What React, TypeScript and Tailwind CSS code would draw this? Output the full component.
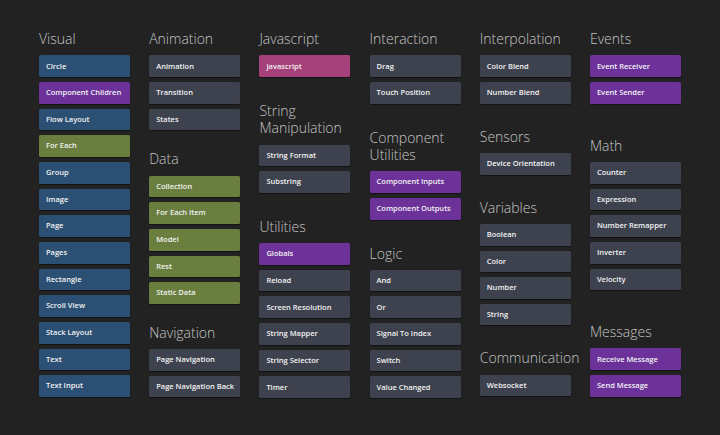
import React from "react";

type Tone = "blue" | "purple" | "green" | "gray" | "pink";

type Section = { title: string[]; tone: Tone; items: { label: string; tone?: Tone }[] };

type Column = { spacing: string; sections: Section[] };

const toneClass: Record<Tone, string> = {
  blue: "bg-[#2b5073]",
  purple: "bg-[#6c329a]",
  green: "bg-[#6a7f3f]",
  gray: "bg-[#3e424f]",
  pink: "bg-[#a6407a]",
};

const s = (title: string, tone: Tone, labels: string[]): Section => ({
  title: title.split("|"),
  tone,
  items: labels.map((label) => ({ label })),
});

const columns: Column[] = [
  {
    spacing: "mt-[25px]",
    sections: [
      {
        title: ["Visual"],
        tone: "blue",
        items: [
          { label: "Circle" },
          { label: "Component Children", tone: "purple" },
          { label: "Flow Layout" },
          { label: "For Each", tone: "green" },
          { label: "Group" },
          { label: "Image" },
          { label: "Page" },
          { label: "Pages" },
          { label: "Rectangle" },
          { label: "Scroll View" },
          { label: "Stack Layout" },
          { label: "Text" },
          { label: "Text Input" },
        ],
      },
    ],
  },
  {
    spacing: "mt-[20px]",
    sections: [
      s("Animation", "gray", ["Animation", "Transition", "States"]),
      s("Data", "green", ["Collection", "For Each Item", "Model", "Rest", "Static Data"]),
      s("Navigation", "gray", ["Page Navigation", "Page Navigation Back"]),
    ],
  },
  {
    spacing: "mt-[25px]",
    sections: [
      s("Javascript", "pink", ["Javascript"]),
      s("String|Manipulation", "gray", ["String Format", "Substring"]),
      {
        title: ["Utilities"],
        tone: "gray",
        items: [
          { label: "Globals", tone: "purple" },
          { label: "Reload" },
          { label: "Screen Resolution" },
          { label: "String Mapper" },
          { label: "String Selector" },
          { label: "Timer" },
        ],
      },
    ],
  },
  {
    spacing: "mt-[25px]",
    sections: [
      s("Interaction", "gray", ["Drag", "Touch Position"]),
      s("Component|Utilities", "purple", ["Component Inputs", "Component Outputs"]),
      s("Logic", "gray", ["And", "Or", "Signal To Index", "Switch", "Value Changed"]),
    ],
  },
  {
    spacing: "mt-[24px]",
    sections: [
      s("Interpolation", "gray", ["Color Blend", "Number Blend"]),
      s("Sensors", "gray", ["Device Orientation"]),
      s("Variables", "gray", ["Boolean", "Color", "Number", "String"]),
      s("Communication", "gray", ["Websocket"]),
    ],
  },
  {
    spacing: "mt-[33px]",
    sections: [
      s("Events", "purple", ["Event Receiver", "Event Sender"]),
      s("Math", "gray", ["Counter", "Expression", "Number Remapper", "Inverter", "Velocity"]),
      s("Messages", "purple", ["Receive Message", "Send Message"]),
    ],
  },
];

const NodeButton = ({ label, tone }: { label: string; tone: Tone }) => (
  <div
    className={`${toneClass[tone]} h-[21.67px] rounded-[1.5px] flex items-center px-[7px] text-[7.5px] font-semibold text-[#f2f2f2] shadow-[0_1px_1px_rgba(0,0,0,0.45)] whitespace-nowrap`}
  >
    {label}
  </div>
);

export default function App() {
  return (
    <div
      className="w-[720px] h-[435px] bg-[#222222] overflow-hidden pt-[30px] pl-[39px]"
      style={{ fontFamily: '"Open Sans", "Noto Sans", sans-serif' }}
    >
      <div className="grid grid-cols-[repeat(6,91px)] gap-x-[19.2px] items-start">
        {columns.map((col, ci) => (
          <div key={ci} className="flex flex-col">
            {col.sections.map((sec, si) => (
              <div key={si} className={si === 0 ? "" : col.spacing}>
                <div className="mb-[8px] text-[14px] leading-[17.3px] font-light text-[#c4c4c4] whitespace-nowrap">
                  {sec.title.map((line) => (
                    <div key={line}>{line}</div>
                  ))}
                </div>
                <div className="flex flex-col gap-[5px]">
                  {sec.items.map((item) => (
                    <NodeButton key={item.label} label={item.label} tone={item.tone ?? sec.tone} />
                  ))}
                </div>
              </div>
            ))}
          </div>
        ))}
      </div>
    </div>
  );
}
